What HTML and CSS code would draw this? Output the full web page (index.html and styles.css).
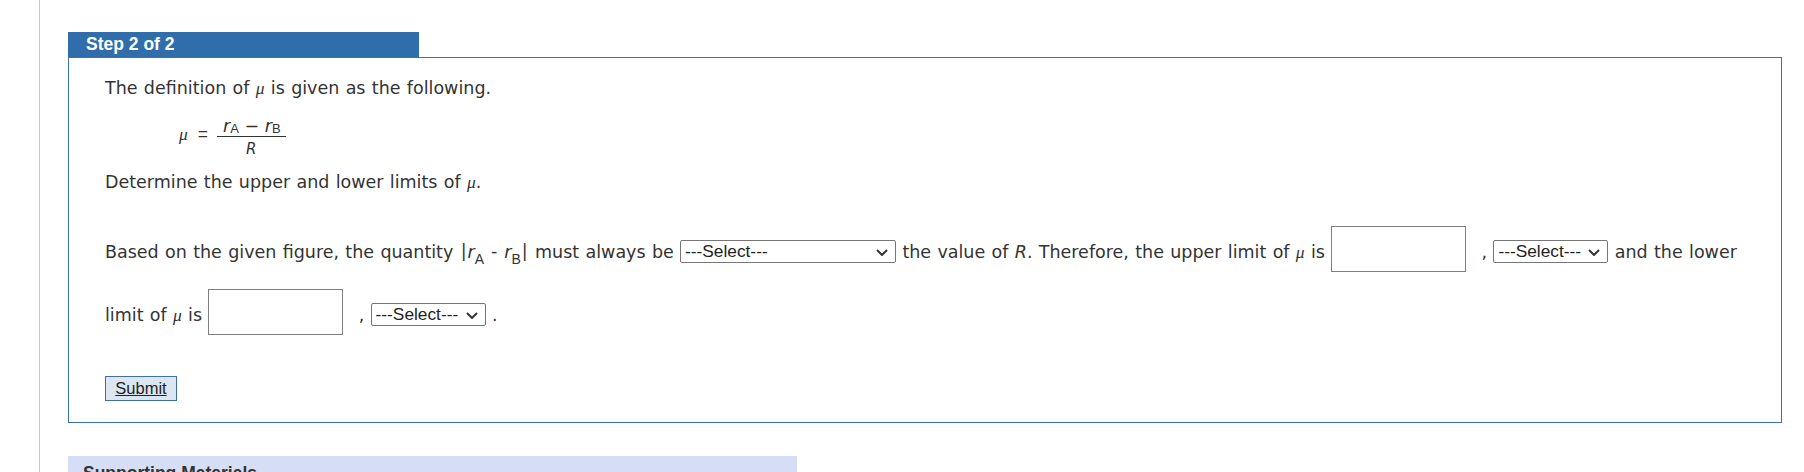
FILE: index.html
```html
<!DOCTYPE html>
<html>
<head>
<meta charset="utf-8">
<title>Step 2 of 2</title>
<link rel="stylesheet" href="styles.css">
</head>
<body>
<div class="page">
  <div class="step-head">Step 2 of 2</div>
  <div class="step-box">
    <p class="p1">The definition of <span class="mu">μ</span> is given as the following.</p>
    <div class="formula">
      <span class="lhs"><span class="mu">μ</span><span class="eq">=</span></span>
      <span class="frac">
        <span class="num"><span class="var">r</span><span class="sub-s">A</span> − <span class="var">r</span><span class="sub-s">B</span></span>
        <span class="den"><span class="var">R</span></span>
      </span>
    </div>
    <p class="p2">Determine the upper and lower limits of <span class="mu">μ</span>.</p>
    <p class="p3">Based on the given figure, the quantity <span class="bar">|</span><span class="var">r</span><span class="sub">A</span> <span class="hy">-</span> <span class="var">r</span><span class="sub">B</span><span class="bar">|</span> must always be <span class="selwrap"><select class="sel sel-wide"><option>---Select---</option></select><svg class="chev" viewBox="0 0 12 7" aria-hidden="true"><polyline points="1,1 6,6 11,1"/></svg></span> the value of <span class="var">R</span>. Therefore, the upper limit of <span class="mu">μ</span> is <input type="text" class="ans"> , <span class="selwrap"><select class="sel sel-narrow"><option>---Select---</option></select><svg class="chev" viewBox="0 0 12 7" aria-hidden="true"><polyline points="1,1 6,6 11,1"/></svg></span> and the lower<br>limit of <span class="mu">μ</span> is <input type="text" class="ans"> , <span class="selwrap"><select class="sel sel-narrow"><option>---Select---</option></select><svg class="chev" viewBox="0 0 12 7" aria-hidden="true"><polyline points="1,1 6,6 11,1"/></svg></span> .</p>
    <button type="button" class="submit">Submit</button>
  </div>
  <div class="support">Supporting Materials</div>
</div>
</body>
</html>
```

FILE: styles.css
```css
html, body {
  margin: 0;
  padding: 0;
  background: #ffffff;
}

body {
  font-family: "DejaVu Sans", Verdana, sans-serif;
  font-size: 17.5px;
  color: #333333;
  overflow: hidden;
}

.page {
  margin-left: 39px;
  border-left: 1px solid #c8c8c8;
  padding: 32px 0 0 28px;
  min-height: 472px;
  box-sizing: border-box;
}

.step-head {
  width: 351px;
  height: 25px;
  line-height: 25px;
  box-sizing: border-box;
  padding-left: 18px;
  background: #2f6dab;
  color: #ffffff;
  font-family: "Liberation Sans", Arial, sans-serif;
  font-weight: bold;
  font-size: 17.5px;
}

.step-box {
  width: 1714px;
  box-sizing: border-box;
  border: 1px solid #3a74b0;
  padding: 20px 36px 21px;
}

p {
  margin: 0;
  line-height: 21px;
  word-spacing: 0.75px;
}

.mu {
  font-family: "Liberation Serif", "Times New Roman", serif;
  font-style: italic;
}

.var {
  font-style: italic;
}

.bar {
  padding: 0 1px;
}

.hy {
  padding: 0 0.6px;
}

.sub {
  font-family: "Liberation Sans", Arial, sans-serif;
  font-size: 14px;
  line-height: 1;
  vertical-align: -6px;
}

.sub-s {
  font-family: "Liberation Sans", Arial, sans-serif;
  font-size: 13px;
  line-height: 1;
  vertical-align: -1px;
}

.formula {
  display: flex;
  align-items: center;
  margin: 17px 0 0 74px;
}

.lhs {
  line-height: 20px;
  margin-bottom: 7px;
}

.eq {
  font-family: "Liberation Sans", Arial, sans-serif;
  margin: 0 9px 0 10px;
}

.frac {
  display: inline-flex;
  flex-direction: column;
  align-items: stretch;
  text-align: center;
}

.num {
  line-height: 20px;
  padding: 0 5px 0 6px;
  border-bottom: 1px solid #333333;
  white-space: nowrap;
}

.den {
  font-size: 15px;
  line-height: 18px;
  padding-top: 3px;
}

.p2 {
  margin-top: 13.5px;
}

.p3 {
  margin-top: 25px;
}

.ans {
  width: 135px;
  height: 46px;
  box-sizing: border-box;
  border: 1px solid #7f7f7f;
  border-radius: 0;
  padding: 5px 4px 0;
  margin: 8.5px 9px 8.5px 0;
  font-family: "Liberation Sans", Arial, sans-serif;
  font-size: 17.5px;
  vertical-align: baseline;
  background: #ffffff;
}

.selwrap {
  position: relative;
  display: inline-block;
}

.sel {
  -webkit-appearance: none;
  appearance: none;
  height: 23px;
  box-sizing: border-box;
  margin: 0;
  padding: 0 0 0 4px;
  border: 1px solid #767676;
  border-radius: 2px;
  font-family: "Liberation Sans", Arial, sans-serif;
  font-size: 17.3px;
  color: #222222;
  background-color: #ffffff;
}

.sel-wide {
  width: 216px;
}

.sel-narrow {
  width: 115px;
}

.chev {
  position: absolute;
  right: 8px;
  top: 9.5px;
  width: 12px;
  height: 7px;
  pointer-events: none;
}

.chev polyline {
  fill: none;
  stroke: #333333;
  stroke-width: 2;
}

.submit {
  display: block;
  width: 72px;
  height: 25px;
  box-sizing: border-box;
  margin-top: 32.5px;
  padding: 0 0 1px;
  border: 1px solid #3f6fa6;
  border-radius: 0;
  background: #dce6f1;
  color: #222222;
  font-family: "Liberation Sans", Arial, sans-serif;
  font-size: 16.5px;
  text-decoration: underline;
}

.support {
  width: 729px;
  box-sizing: border-box;
  margin-top: 33px;
  padding: 7px 15px;
  background: #d6def6;
  color: #333333;
  font-family: "Liberation Sans", Arial, sans-serif;
  font-weight: bold;
  font-size: 17.5px;
  line-height: 20px;
}
```
